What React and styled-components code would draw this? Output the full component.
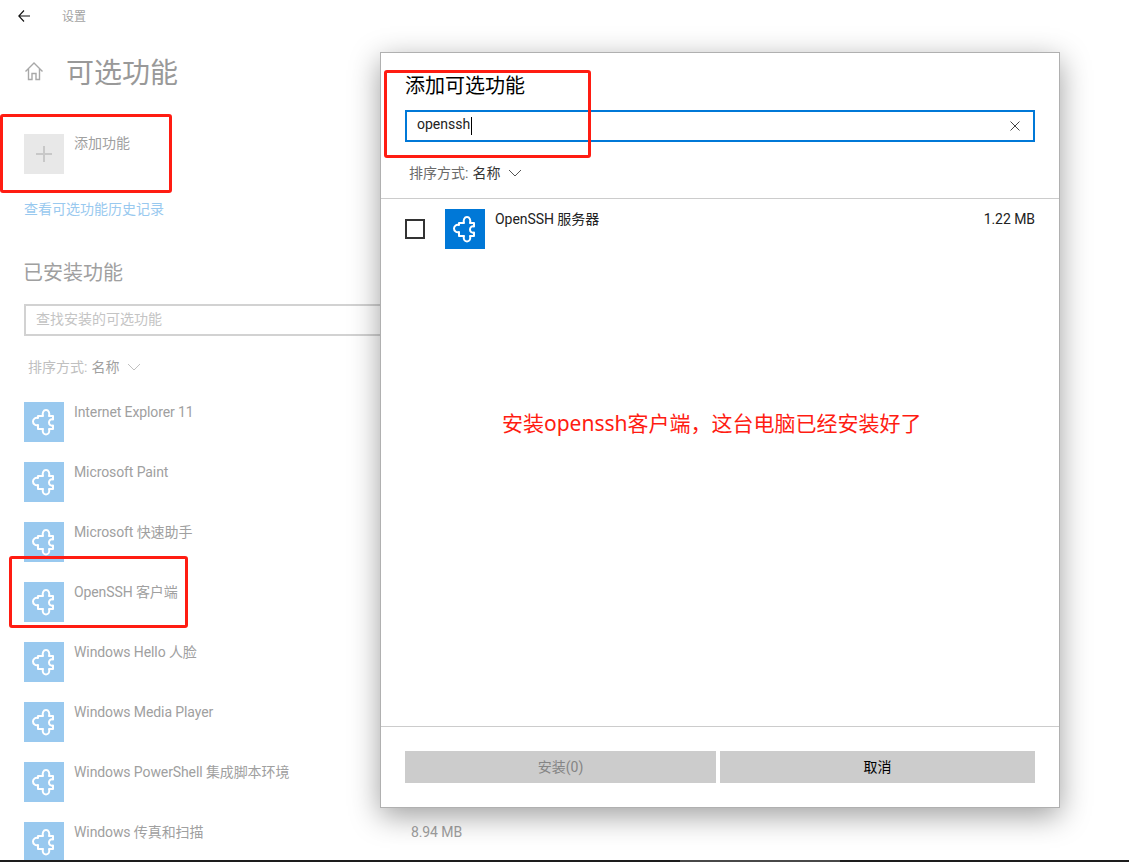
import React from 'react'
import styled, {createGlobalStyle} from 'styled-components'

const GlobalStyle = createGlobalStyle`
  html, body {
    margin: 0;
    padding: 0;
    background: #fff;
    overflow: hidden;
  }
  * {
    box-sizing: border-box;
  }
  body {
    font-family: Roboto, "Noto Sans CJK SC", sans-serif;
  }
`;

const Page = styled.div`
  position: relative;
  width: 1129px;
  height: 862px;
  overflow: hidden;
  background: #fff;
`;

const TopBar = styled.div`
  display: flex;
  align-items: center;
  height: 32px;
  padding-left: 18px;
  gap: 32px;
  font-size: 12px;
  color: #a3a3a3;
`;

const TopLabel = styled.span`
  margin-top: -2px;
`;

const TitleRow = styled.div`
  display: flex;
  align-items: center;
  height: 56px;
  margin-top: 11px;
  padding-left: 25px;
  gap: 23px;
`;

const Title = styled.h1`
  margin: 0;
  font-size: 28px;
  font-weight: 400;
  color: #999;
`;

const Content = styled.div`
  padding-left: 24px;
  width: 462px;
`;

const AddRow = styled.div`
  display: flex;
  gap: 10px;
  margin-top: 35px;
  font-size: 14px;
  line-height: 18px;
  color: #a0a0a0;
`;

const AddTile = styled.div`
  display: flex;
  align-items: center;
  justify-content: center;
  width: 40px;
  height: 40px;
  background: #e8e8e8;
`;

const HistoryLink = styled.div`
  margin-top: 25px;
  font-size: 14px;
  line-height: 20px;
  color: #99c9ef;
`;

const SectionTitle = styled.h2`
  margin: 40px 0 0 -1px;
  font-size: 20px;
  font-weight: 400;
  line-height: 28px;
  color: #a0a0a0;
`;

const SearchBox = styled.div`
  display: flex;
  align-items: center;
  height: 32px;
  margin-top: 17px;
  padding: 0 0 5px 10px;
  border: 2px solid #d2d2d2;
  font-size: 14px;
  color: #c4c4c4;
`;

const Sort = styled.div`
  display: flex;
  align-items: center;
  height: 20px;
  padding-left: 4px;
  gap: 4px;
  font-size: 14px;
  line-height: 18px;
  padding-bottom: 1px;
  color: ${p => p.$dim ? '#c0c0c0' : '#6b6b6b'};
  margin-top: ${p => p.$dim ? '21px' : '0'};
`;

const SortValue = styled.span`
  color: ${p => p.$dim ? '#a0a0a0' : '#333'};
`;

const FeatureList = styled.div`
  display: flex;
  flex-direction: column;
  gap: 20px;
  margin-top: 25px;
`;

const FeatureRow = styled.div`
  display: flex;
  justify-content: space-between;
  height: 40px;
  font-size: 14px;
  line-height: 20px;
  letter-spacing: -0.1px;
  color: #a0a0a0;
`;

const FeatureName = styled.div`
  display: flex;
  gap: 10px;
`;

const FeatureTile = styled.div`
  width: 40px;
  height: 40px;
  flex: none;
  background: ${p => p.$active ? '#0078d7' : '#99c9ef'};
`;

const Dialog = styled.div`
  position: absolute;
  left: 380px;
  top: 52px;
  width: 680px;
  height: 756px;
  display: flex;
  flex-direction: column;
  background: #fff;
  border: 1px solid #b0b0b0;
  box-shadow: 0 8px 28px rgba(0, 0, 0, 0.38);
`;

const DialogHead = styled.div`
  height: 146px;
  padding: 19px 24px 0;
  border-bottom: 1px solid #ccc;
`;

const DialogTitle = styled.h2`
  margin: 0;
  font-size: 20px;
  font-weight: 400;
  line-height: 28px;
  color: #000;
`;

const SearchField = styled.div`
  display: flex;
  align-items: center;
  justify-content: space-between;
  height: 32px;
  margin: 10px 0 21px;
  padding: 0 13px 1px 10px;
  border: 2px solid #0078d7;
  font-size: 14px;
  color: #222;
`;

const Caret = styled.span`
  display: inline-block;
  width: 1px;
  height: 18px;
  margin-left: 1px;
  vertical-align: middle;
  background: #000;
`;

const DialogBody = styled.div`
  flex: 1;
  padding: 10px 24px 0;
`;

const ResultRow = styled.div`
  display: flex;
  justify-content: space-between;
  font-size: 14px;
  line-height: 20px;
  letter-spacing: -0.05px;
  color: #222;
`;

const ResultLeft = styled.div`
  display: flex;
  gap: 10px;
`;

const Checkbox = styled.div`
  width: 20px;
  height: 20px;
  margin: 10px 10px 0 0;
  border: 2px solid #333;
`;

const DialogFoot = styled.div`
  display: flex;
  gap: 4px;
  height: 81px;
  padding: 24px 24px 0;
  border-top: 1px solid #ccc;
`;

const FootButton = styled.div`
  display: flex;
  align-items: center;
  justify-content: center;
  height: 32px;
  padding-bottom: 2px;
  width: ${p => p.$width}px;
  background: #ccc;
  font-size: 14px;
  color: ${p => p.$disabled ? '#858585' : '#000'};
`;

const Mark = styled.div`
  position: absolute;
  left: ${p => p.$x}px;
  top: ${p => p.$y}px;
  width: ${p => p.$w}px;
  height: ${p => p.$h}px;
  border: 3px solid #ff1c12;
  border-radius: 3px;
`;

const Note = styled.div`
  position: absolute;
  left: 502px;
  top: 409px;
  font-family: "Noto Sans", "Noto Sans CJK SC", sans-serif;
  font-size: 21px;
  line-height: 28px;
  white-space: nowrap;
  color: #ff1c12;
`;

const TaskBar = styled.div`
  position: absolute;
  left: 0;
  right: 0;
  bottom: 0;
  height: 2px;
  display: flex;
  background: #1d1d1d;
`;

const TaskBarThumb = styled.div`
  width: 160px;
  margin-left: 680px;
  background: #484848;
`;

const Puzzle = () => (
  <svg width="40" height="40" viewBox="0 0 40 40" fill="none">
    <path
      d="M14 14H19C18 11 19.5 8 22 8C24.5 8 26 11 25 14H29V17.5C26.5 16.8 25 18.3 25 20.5C25 22.7 26.5 24.2 29 23.5V27H25C26 30 24.5 32.5 22 32.5C19.5 32.5 18 30 19 27H14V23C11.5 24 9 22 9 19.5C9 17 11.5 15 14 16Z"
      stroke="#fff"
      strokeWidth="2"
      strokeLinejoin="round"
    />
  </svg>
)

const Chevron = ({color}) => (
  <svg width="14" height="8" viewBox="0 0 14 8" fill="none" style={{marginLeft: 4}}>
    <path d="M1 1L7 7L13 1" stroke={color} strokeWidth="1" />
  </svg>
)

const features = [
  {name: 'Internet Explorer 11'},
  {name: 'Microsoft Paint'},
  {name: 'Microsoft 快速助手'},
  {name: 'OpenSSH 客户端'},
  {name: 'Windows Hello 人脸'},
  {name: 'Windows Media Player'},
  {name: 'Windows PowerShell 集成脚本环境'},
  {name: 'Windows 传真和扫描', size: '8.94 MB'},
]

export default function App() {
  return (
    <Page>
      <GlobalStyle />
      <TopBar>
        <svg width="12" height="12" viewBox="0 0 12 12" fill="none">
          <path d="M6 0.5L0.8 6L6 11.5M0.8 6H12" stroke="#111" strokeWidth="1.1" />
        </svg>
        <TopLabel>设置</TopLabel>
      </TopBar>
      <TitleRow>
        <svg width="18" height="20" viewBox="0 0 18 20" fill="none">
          <path d="M0.5 10.5L9 2L17.5 10.5M3.5 8V18.5H7V12.5H11V18.5H14.5V8" stroke="#a8a8a8" strokeWidth="1.4" />
        </svg>
        <Title>可选功能</Title>
      </TitleRow>
      <Content>
        <AddRow>
          <AddTile>
            <svg width="16" height="16" viewBox="0 0 16 16" fill="none">
              <path d="M8 0V16M0 8H16" stroke="#c8c8c8" strokeWidth="2" />
            </svg>
          </AddTile>
          <span>添加功能</span>
        </AddRow>
        <HistoryLink>查看可选功能历史记录</HistoryLink>
        <SectionTitle>已安装功能</SectionTitle>
        <SearchBox>查找安装的可选功能</SearchBox>
        <Sort $dim>
          排序方式: <SortValue $dim>名称</SortValue>
          <Chevron color="#c0c0c0" />
        </Sort>
        <FeatureList>
          {features.map(f => (
            <FeatureRow key={f.name}>
              <FeatureName>
                <FeatureTile><Puzzle /></FeatureTile>
                <span>{f.name}</span>
              </FeatureName>
              {f.size && <span>{f.size}</span>}
            </FeatureRow>
          ))}
        </FeatureList>
      </Content>

      <Dialog>
        <DialogHead>
          <DialogTitle>添加可选功能</DialogTitle>
          <SearchField>
            <span>openssh<Caret /></span>
            <svg width="10" height="10" viewBox="0 0 10 10" fill="none">
              <path d="M0.5 0.5L9.5 9.5M9.5 0.5L0.5 9.5" stroke="#444" strokeWidth="1" />
            </svg>
          </SearchField>
          <Sort>
            排序方式: <SortValue>名称</SortValue>
            <Chevron color="#555" />
          </Sort>
        </DialogHead>
        <DialogBody>
          <ResultRow>
            <ResultLeft>
              <Checkbox />
              <FeatureTile $active><Puzzle /></FeatureTile>
              <span>OpenSSH 服务器</span>
            </ResultLeft>
            <span>1.22 MB</span>
          </ResultRow>
        </DialogBody>
        <DialogFoot>
          <FootButton $width={311} $disabled>安装(0)</FootButton>
          <FootButton $width={315}>取消</FootButton>
        </DialogFoot>
      </Dialog>

      <Note>安装openssh客户端，这台电脑已经安装好了</Note>
      <Mark $x={0} $y={114} $w={172} $h={79} />
      <Mark $x={384} $y={70} $w={207} $h={88} />
      <Mark $x={9} $y={556} $w={179} $h={72} />
      <TaskBar><TaskBarThumb /></TaskBar>
    </Page>
  )
}
